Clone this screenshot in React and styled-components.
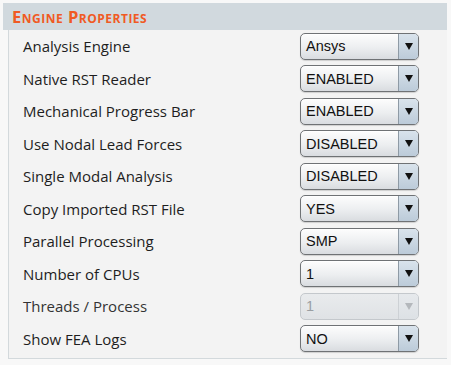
import React from "react";
import styled, { createGlobalStyle } from "styled-components";

const GlobalStyle = createGlobalStyle`
  html, body {
    margin: 0;
    padding: 0;
    background: #f8f8f8;
  }
  body {
    font-family: "Open Sans", "Liberation Sans", sans-serif;
  }
`;

const Page = styled.div`
  width: 451px;
  height: 365px;
  padding: 3px 4px 0 3px;
  box-sizing: border-box;
`;

const Header = styled.div`
  height: 27px;
  background: #d1d9de;
  display: flex;
  align-items: center;
  padding-left: 9px;
  color: #f05a24;
  font-weight: 700;
  font-size: 16.5px;
  font-variant: small-caps;
  letter-spacing: 0.5px;
`;

const Panel = styled.div`
  margin-left: 5px;
  background: #f3f3f3;
  border-left: 1px solid #d3d9dc;
  border-bottom: 1px solid #d3d9dc;
  padding: 0 0 3px 14px;
`;

const Row = styled.div`
  height: 32.5px;
  display: flex;
  align-items: center;
  justify-content: space-between;
  padding-right: 28px;
`;

const Label = styled.span`
  font-size: 15px;
  color: ${(p) => (p.$muted ? "#333" : "#1e1e1e")};
`;

const Select = styled.div`
  width: 119px;
  height: 27px;
  box-sizing: border-box;
  display: flex;
  border: 1px solid ${(p) => (p.$disabled ? "#c4c8cc" : "#6f7275")};
  border-radius: 5px;
  overflow: hidden;
  background: ${(p) =>
    p.$disabled
      ? "linear-gradient(#e9ebed, #dfe2e5)"
      : "linear-gradient(#fdfdfd, #eceef0 55%, #d9dce0)"};
  box-shadow: ${(p) =>
    p.$disabled ? "none" : "inset 0 1px 0 #fff, 0 1px 1px rgba(0,0,0,0.15)"};
`;

const Value = styled.div`
  flex: 1;
  display: flex;
  align-items: center;
  padding-left: 5px;
  font-family: "Liberation Sans", Arial, sans-serif;
  font-size: 14.5px;
  color: ${(p) => (p.$disabled ? "#9a9ea2" : "#111")};
`;

const Arrow = styled.div`
  width: 19px;
  display: flex;
  align-items: center;
  justify-content: center;
  border-left: 1px solid ${(p) => (p.$disabled ? "#cdd1d5" : "#8e9aa5")};
  background: ${(p) =>
    p.$disabled
      ? "linear-gradient(#e6e9ec, #dde1e5)"
      : "linear-gradient(#d9e3ec, #bccbd9)"};

  &::after {
    content: "";
    width: 0;
    height: 0;
    border-left: 4px solid transparent;
    border-right: 4px solid transparent;
    border-top: 7px solid ${(p) => (p.$disabled ? "#b4b8bc" : "#111")};
  }
`;

const rows = [
  ["Analysis Engine", "Ansys"],
  ["Native RST Reader", "ENABLED"],
  ["Mechanical Progress Bar", "ENABLED"],
  ["Use Nodal Lead Forces", "DISABLED"],
  ["Single Modal Analysis", "DISABLED"],
  ["Copy Imported RST File", "YES"],
  ["Parallel Processing", "SMP"],
  ["Number of CPUs", "1"],
  ["Threads / Process", "1", true],
  ["Show FEA Logs", "NO"],
];

export default function App() {
  return (
    <>
      <GlobalStyle />
      <Page>
        <Header>Engine Properties</Header>
        <Panel>
          {rows.map(([label, value, disabled]) => (
            <Row key={label}>
              <Label $muted={disabled}>{label}</Label>
              <Select $disabled={disabled}>
                <Value $disabled={disabled}>{value}</Value>
                <Arrow $disabled={disabled} />
              </Select>
            </Row>
          ))}
        </Panel>
      </Page>
    </>
  );
}
